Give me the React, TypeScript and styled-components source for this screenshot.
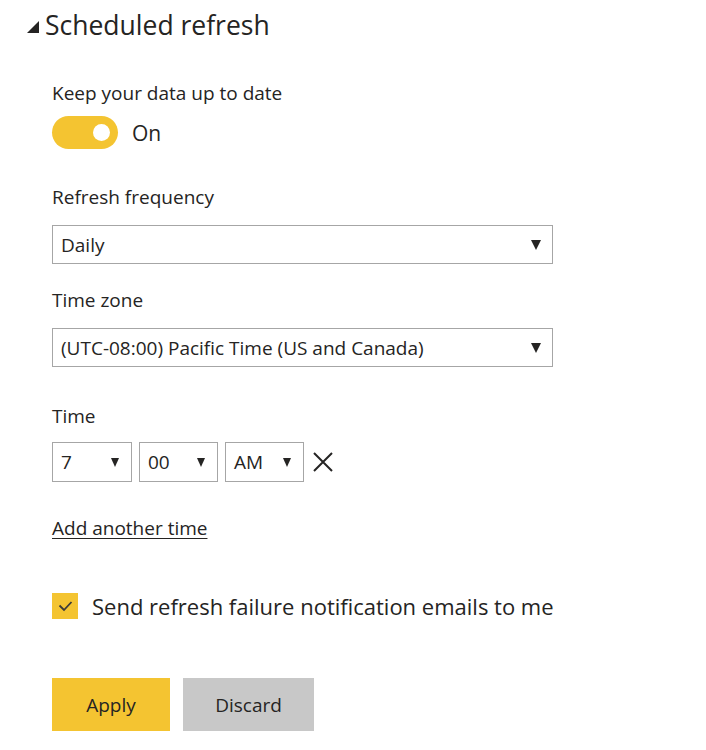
import React from "react";
import styled, { createGlobalStyle } from "styled-components";

const GlobalStyle = createGlobalStyle`
	html, body {
		margin: 0;
		padding: 0;
		background: #ffffff;
	}
	body {
		font-family: "Open Sans", "Noto Sans", "Liberation Sans", sans-serif;
		color: #252423;
	}
`;

const Panel = styled.div`
	width: 706px;
	height: 750px;
	background: #ffffff;
	padding-top: 6px;
	box-sizing: border-box;
`;

const SectionHeader = styled.div`
	display: flex;
	align-items: center;
	gap: 6px;
	padding-left: 27px;
	height: 38px;
`;

const Caret = styled.span`
	width: 0;
	height: 0;
	border-left: 12px solid transparent;
	border-bottom: 12px solid #252423;
	margin-top: 4px;
`;

const Title = styled.h2`
	margin: 0;
	font-size: 26.5px;
	font-weight: 400;
	color: #252423;
`;

const Body = styled.div`
	padding-left: 52px;
	display: flex;
	flex-direction: column;
`;

const FieldLabel = styled.div<{ $top: number }>`
	margin-top: ${(p) => p.$top}px;
	font-size: 19px;
	line-height: 24px;
	color: #252423;
`;

const ToggleRow = styled.div`
	display: flex;
	align-items: center;
	gap: 14px;
	margin-top: 11px;
`;

const Track = styled.div`
	width: 66px;
	height: 33px;
	border-radius: 17px;
	background: #f4c431;
	position: relative;
`;

const Knob = styled.div`
	position: absolute;
	right: 8px;
	top: 8px;
	width: 17px;
	height: 17px;
	border-radius: 50%;
	background: #ffffff;
`;

const ToggleText = styled.span`
	font-size: 21px;
	color: #252423;
`;

const SelectBox = styled.div<{ $w: number }>`
	width: ${(p) => p.$w}px;
	height: 39px;
	box-sizing: border-box;
	border: 1px solid #a6a6a6;
	display: flex;
	align-items: center;
	justify-content: space-between;
	padding: 0 11px 0 8px;
	font-size: 19px;
	color: #252423;
`;

const Arrow = styled.span<{ $small?: boolean }>`
	width: 0;
	height: 0;
	border-left: ${(p) => (p.$small ? 4 : 5)}px solid transparent;
	border-right: ${(p) => (p.$small ? 4 : 5)}px solid transparent;
	border-top: ${(p) => (p.$small ? 9 : 10)}px solid #252423;
`;

const WideSelect = styled(SelectBox)`
	margin-top: 16px;
`;

const TimeRow = styled.div`
	display: flex;
	align-items: center;
	gap: 7px;
	margin-top: 14px;
`;

const TimeSelect = styled(SelectBox)`
	height: 40px;
	padding-right: 12px;
`;

const RemoveIcon = styled.svg`
	width: 22px;
	height: 22px;
	margin-left: 1px;
`;

const AddLink = styled.a`
	margin-top: 34px;
	font-size: 19px;
	line-height: 24px;
	color: #252423;
	text-decoration: underline;
	text-underline-offset: 3px;
	align-self: flex-start;
	cursor: pointer;
`;

const CheckRow = styled.label`
	display: flex;
	align-items: center;
	gap: 14px;
	margin-top: 51px;
`;

const CheckBox = styled.span`
	width: 26px;
	height: 26px;
	background: #f4c431;
	display: flex;
	align-items: center;
	justify-content: center;
`;

const CheckText = styled.span`
	font-size: 22px;
	color: #252423;
`;

const ButtonRow = styled.div`
	display: flex;
	gap: 13px;
	margin-top: 57px;
`;

const Button = styled.button<{ $primary?: boolean; $w: number }>`
	width: ${(p) => p.$w}px;
	height: 53px;
	border: none;
	font-family: inherit;
	font-size: 19px;
	color: #252423;
	background: ${(p) => (p.$primary ? "#f4c431" : "#c8c8c8")};
	padding: 0;
	cursor: pointer;
`;

function Select({ value, width, wide }: { value: string; width: number; wide?: boolean }) {
	const Box = wide ? WideSelect : TimeSelect;
	return (
		<Box $w={width}>
			<span>{value}</span>
			<Arrow $small={!wide} />
		</Box>
	);
}

export default function App() {
	return (
		<Panel>
			<GlobalStyle />
			<SectionHeader>
				<Caret />
				<Title>Scheduled refresh</Title>
			</SectionHeader>
			<Body>
				<FieldLabel $top={37}>Keep your data up to date</FieldLabel>
				<ToggleRow>
					<Track>
						<Knob />
					</Track>
					<ToggleText>On</ToggleText>
				</ToggleRow>

				<FieldLabel $top={36}>Refresh frequency</FieldLabel>
				<Select value="Daily" width={501} wide />

				<FieldLabel $top={24}>Time zone</FieldLabel>
				<Select value="(UTC-08:00) Pacific Time (US and Canada)" width={501} wide />

				<FieldLabel $top={37}>Time</FieldLabel>
				<TimeRow>
					<Select value="7" width={80} />
					<Select value="00" width={79} />
					<Select value="AM" width={79} />
					<RemoveIcon viewBox="0 0 22 22">
						<path d="M2 2 L20 20 M20 2 L2 20" stroke="#252423" strokeWidth="2" fill="none" />
					</RemoveIcon>
				</TimeRow>

				<AddLink>Add another time</AddLink>

				<CheckRow>
					<CheckBox>
						<svg width="15" height="12" viewBox="0 0 15 12">
							<path d="M1.5 5.5 L6 10 L13.5 2" stroke="#3b3a39" strokeWidth="1.8" fill="none" />
						</svg>
					</CheckBox>
					<CheckText>Send refresh failure notification emails to me</CheckText>
				</CheckRow>

				<ButtonRow>
					<Button $primary $w={118}>Apply</Button>
					<Button $w={131}>Discard</Button>
				</ButtonRow>
			</Body>
		</Panel>
	);
}
